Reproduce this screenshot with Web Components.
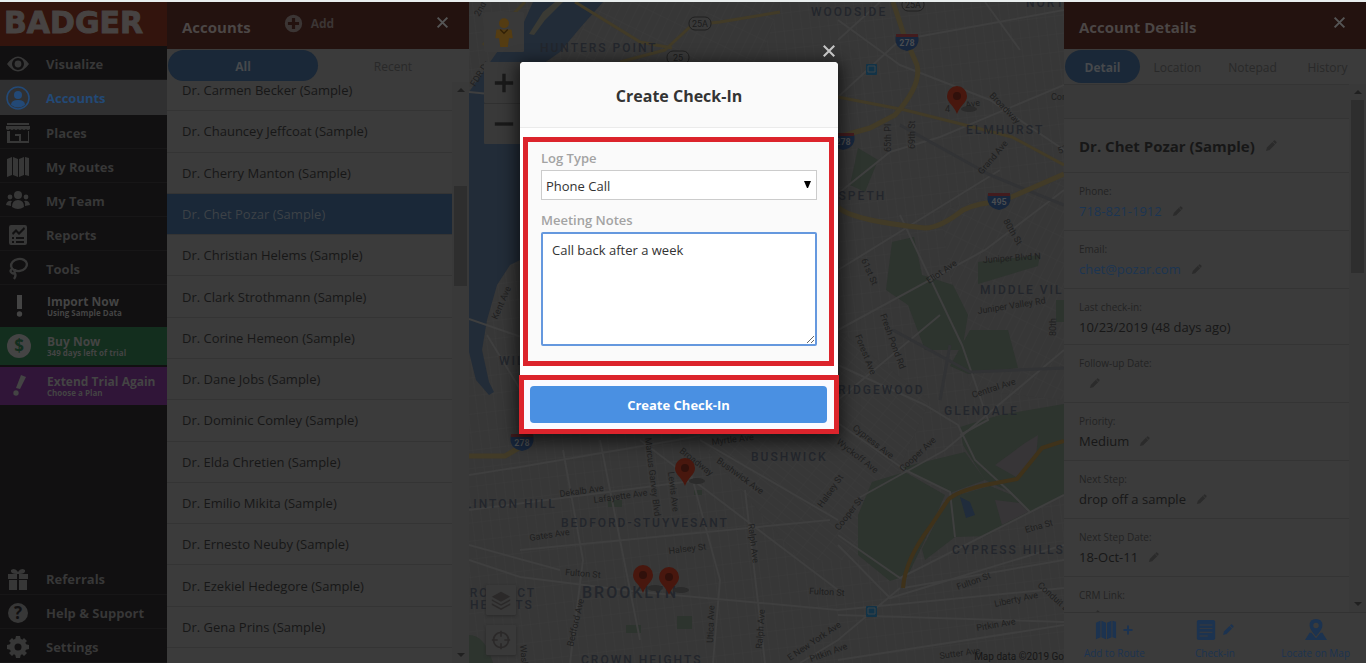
<!DOCTYPE html>
<html lang="en">
<head>
<meta charset="utf-8">
<title>Badger</title>
<style>
  html, body { height: 100%; }
  body {
    margin: 0;
    background: #3b3b3b;
    color: #171717;
    font-family: "Open Sans", "Noto Sans", sans-serif;
    font-size: 13px;
    overflow: hidden;
  }
</style>
</head>
<body>

<badger-app>
  <nav-rail slot="nav">
    <nav-item icon="eye">Visualize</nav-item>
    <nav-item icon="user" active>Accounts</nav-item>
    <nav-item icon="store">Places</nav-item>
    <nav-item icon="map">My Routes</nav-item>
    <nav-item icon="team">My Team</nav-item>
    <nav-item icon="report">Reports</nav-item>
    <nav-item icon="lasso">Tools</nav-item>
    <nav-promo icon="bang" note="Using Sample Data">Import Now</nav-promo>
    <nav-promo icon="dollar" note="349 days left of trial" tone="green">Buy Now</nav-promo>
    <nav-promo icon="slant" note="Choose a Plan" tone="purple">Extend Trial Again</nav-promo>
    <nav-item slot="foot" icon="gift">Referrals</nav-item>
    <nav-item slot="foot" icon="help">Help &amp; Support</nav-item>
    <nav-item slot="foot" icon="gear">Settings</nav-item>
  </nav-rail>

  <side-panel slot="list" heading="Accounts" add>
    <tab-bar slot="tabs" tabs="All,Recent"></tab-bar>
    <account-list></account-list>
    <scroll-track slot="scroll" start="104" size="100"></scroll-track>
  </side-panel>

  <city-map slot="map"></city-map>

  <side-panel slot="details" heading="Account Details">
    <tab-bar slot="tabs" tabs="Detail,Location,Notepad,History" compact></tab-bar>
    <account-details></account-details>
    <scroll-track slot="scroll" start="16" size="173"></scroll-track>
    <action-bar slot="foot"></action-bar>
  </side-panel>
</badger-app>

<checkin-dialog></checkin-dialog>

<script>
  (function() {
    const ICONS = {
      eye: '<path fill-rule="evenodd" d="M1 12Q12-3 23 12Q12 27 1 12ZM12 6a6 6 0 1 0 0 12a6 6 0 0 0 0-12Z"/><circle cx="12" cy="12" r="3.4"/>',
      user: '<circle cx="12" cy="12" r="11" fill="none" stroke="currentColor" stroke-width="1.6"/><circle cx="12" cy="9" r="4"/><path d="M5 19Q5 14 12 14T19 19Q12 24 5 19Z"/>',
      store: '<path d="M1 2H23V4H1ZM0 5H24V8Q22 10 20 8Q18 10 16 8Q14 10 12 8Q10 10 8 8Q6 10 4 8Q2 10 0 8ZM2 10H4V20H22V10H23V22H1V10ZM9 13H15V21H13V15H9Z"/>',
      map: '<path d="M1 4L6 2V20L1 22ZM7 2L12 4V22L7 20ZM13 4L18 2V20L13 22ZM19 2L23 3V21L19 20Z"/>',
      team: '<circle cx="12" cy="6" r="4"/><circle cx="4" cy="8" r="2.4"/><circle cx="20" cy="8" r="2.4"/><path d="M6 18Q6 11 12 11T18 18Q12 22 6 18ZM0 16Q1 11 6 12Q4 14 5 17ZM24 16Q23 11 18 12Q20 14 19 17Z"/>',
      report: '<path fill-rule="evenodd" d="M5 2H19Q21 2 21 4V20Q21 22 19 22H5Q3 22 3 20V4Q3 2 5 2ZM6 10L10 6L13 9L18 4L19 6L13 12L10 9L7 12ZM6 14H8V16H6ZM10 14H18V16H10ZM6 18H8V20H6ZM10 18H18V20H10Z"/>',
      lasso: '<g fill="none" stroke="currentColor" stroke-width="2.4"><ellipse cx="13" cy="8" rx="8" ry="6" transform="rotate(-10 13 8)"/><path d="M6 12Q3 14 6 16T9 12M8 15Q11 18 8 22"/></g>',
      bang: '<path d="M10 1H15V15H10Z"/><circle cx="12.500" cy="20" r="2.700"/>',
      slant: '<path d="M14 1L19 3L13 15L9 14Z"/><circle cx="9" cy="19" r="2.700"/>',
      gift: '<path d="M2 7H11V12H2ZM13 7H22V12H13ZM3 13H11V23H3ZM13 13H21V23H13ZM11 7Q4 7 5 3Q9 0 12 5Q15 0 19 3Q20 7 13 7Z"/>',
      gear: '<circle cx="12" cy="12" r="6" fill="none" stroke="currentColor" stroke-width="5"/><path d="M10 1H14L15 5H9ZM10 23H14L15 19H9ZM1 10V14L5 15V9ZM23 10V14L19 15V9ZM3 6L6 3L9 6L6 9ZM21 6L18 3L15 6L18 9ZM3 18L6 21L9 18L6 15ZM21 18L18 21L15 18L18 15Z"/>',
      plus: '<path fill-rule="evenodd" d="M12 1a11 11 0 1 0 0 22a11 11 0 0 0 0-22ZM10 5H14V10H19V14H14V19H10V14H5V10H10Z"/>',
      add: '<path d="M10 3H14V10H21V14H14V21H10V14H3V10H10Z"/>',
      close: '<path d="M3 3L21 21M21 3L3 21" fill="none" stroke="currentColor" stroke-width="3.6"/>',
      pencil: '<path d="M2 22L4 15L15 4L20 9L9 20ZM16 3L18 1Q19 0 21 2L23 4Q24 5 22 7L21 8Z"/>',
      note: '<path fill-rule="evenodd" d="M4 1H20Q22 1 22 3V21Q22 23 20 23H4Q2 23 2 21V3Q2 1 4 1ZM5 6H19V7H5ZM5 10H19V11H5ZM5 14H19V15H5ZM5 18H14V19H5Z"/>',
      locate: '<path fill-rule="evenodd" d="M12 0Q19 0 19 7Q19 11 12 19Q5 11 5 7Q5 0 12 0ZM12 4a3 3 0 1 0 0 6a3 3 0 0 0 0-6Z"/><path d="M5 15H7L12 21L17 15H19L24 23H0Z"/>',
      man: '<circle cx="12" cy="5" r="4"/><path d="M6 10H18L19 17H16L15 24H9L8 17H5Z"/><path d="M9 10L12 13L15 10" fill="none" stroke="#302007"/>',
      minus: '<path d="M1 10H23V14H1Z"/>',
      zoomin: '<path d="M10 1H14V10H23V14H14V23H10V14H1V10H10Z"/>',
      layers: '<path d="M12 2L23 8L12 14L1 8ZM1 11L12 17L23 11V13L12 19L1 13ZM1 16L12 22L23 16V18L12 24L1 18Z"/>',
      target: '<g fill="none" stroke="currentColor" stroke-width="2"><circle cx="12" cy="12" r="9"/><path d="M12 1V8M12 16V23M1 12H8M16 12H23"/></g>'
    };

    // glyph on a filled disc, with the character kept as text
    const disc = (char, ink, r) => '<circle cx="12" cy="12" r="' + r + '"/><text x="12" y="18" text-anchor="middle" font-size="17" font-weight="700" fill="' + ink + '">' + char + '</text>';
    ICONS.dollar = disc('$', '#132e1e', 12);
    ICONS.help = disc('?', '#111011', 10);

    function define(name, render) {
      window.customElements.define(name, class extends HTMLElement {
        connectedCallback() {
          if (this.shadowRoot) { return; }
          const template = document.createElement('template');
          template.innerHTML = render(this);
          this.attachShadow({ mode: 'open' }).appendChild(template.content.cloneNode(true));
        }
      });
    }

    define('app-icon', el => `
      <style>
        :host { display: inline-block; width: 24px; height: 24px; flex: none; }
        svg { display: block; width: 100%; height: 100%; fill: currentColor; }
      </style>
      <svg viewBox="0 0 24 24" aria-hidden="true">${ICONS[el.getAttribute('name')]}</svg>
    `);

    define('badger-app', () => `
      <style>
        :host {
          display: grid;
          grid-template-columns: 167px 302px minmax(0, 1fr) 302px;
          grid-template-rows: minmax(0, 1fr);
          height: 100vh;
          box-sizing: border-box;
          border-top: 2px solid #e9eeee;
        }
      </style>
      <slot name="nav"></slot><slot name="list"></slot><slot name="map"></slot><slot name="details"></slot>
    `);

    define('nav-rail', () => `
      <style>
        :host { display: flex; flex-direction: column; background: #111011; min-height: 0; }
        .logo {
          background: #33140d;
          color: #474342;
          height: 44px;
          line-height: 42px;
          padding-left: 4px;
          font-family: "DejaVu Sans", sans-serif;
          font-weight: 700;
          font-size: 30px;
          -webkit-text-stroke: 1px #474342;
        }
        .foot { margin-top: auto; }
      </style>
      <div class="logo">BADGER</div>
      <nav><slot></slot></nav>
      <nav class="foot"><slot name="foot"></slot></nav>
    `);

    define('nav-item', el => `
      <style>
        :host { display: block; color: #373737; }
        :host([active]) { color: #234976; background: #303031; }
        a {
          display: flex;
          align-items: center;
          gap: 16px;
          height: 34px;
          padding: 2px 0 0 6px;
          box-sizing: border-box;
          border-bottom: 1px solid #171617;
          color: inherit;
          text-decoration: none;
          font-weight: 700;
          font-size: 13px;
        }
        :host([active]) a { height: 35px; border-color: #303031; }
      </style>
      <a href="#"><app-icon name="${el.getAttribute('icon')}"></app-icon><slot></slot></a>
    `);

    define('nav-promo', el => `
      <style>
        :host { display: block; color: #444; }
        :host([tone=green]) { background: #132e1e; }
        :host([tone=purple]) { background: #301538; margin-top: 2px; }
        a {
          display: flex;
          align-items: center;
          gap: 16px;
          height: 38px;
          padding-left: 7px;
          color: inherit;
          text-decoration: none;
          font-weight: 700;
          font-size: 12px;
          line-height: 14px;
        }
        :host(:not([tone])) a { height: 42px; }
        small { display: block; font-size: 8px; line-height: 8px; }
      </style>
      <a href="#"><app-icon name="${el.getAttribute('icon')}"></app-icon><span><slot></slot><small>${el.getAttribute('note')}</small></span></a>
    `);

    define('side-panel', el => `
      <style>
        :host { display: flex; flex-direction: column; background: #3b3b3b; min-width: 0; min-height: 0; }
        header {
          display: flex;
          align-items: center;
          height: 47px;
          flex: none;
          padding: 0 20px 0 15px;
          background: #23120f;
          color: #4b4645;
        }
        h2 { margin: 0; font-size: 15px; line-height: 20px; padding-top: 2px; }
        button { border: 0; padding: 0; background: none; color: inherit; font: inherit; }
        .add { display: flex; align-items: center; gap: 8px; margin: 0 0 4px 33px; color: #3b3534; font-size: 12px; font-weight: 700; }
        .add app-icon { width: 19px; height: 19px; }
        .close { margin: 0 0 6px auto; color: #555; }
        .close app-icon { width: 13px; height: 13px; display: block; }
        .body { flex: 1; display: flex; min-height: 0; overflow: hidden; }
        .content { flex: 1; min-width: 0; display: flex; flex-direction: column; overflow: hidden; }
      </style>
      <header>
        <h2>${el.getAttribute('heading')}</h2>
        ${el.hasAttribute('add') ? '<button class="add"><app-icon name="plus"></app-icon>Add</button>' : ''}
        <button class="close" aria-label="Close"><app-icon name="close"></app-icon></button>
      </header>
      <slot name="tabs"></slot>
      <div class="body"><div class="content"><slot></slot></div><slot name="scroll"></slot></div>
      <slot name="foot"></slot>
    `);

    define('tab-bar', el => `
      <style>
        :host { display: block; flex: none; }
        div { display: grid; grid-auto-flow: column; grid-auto-columns: 1fr; padding: 1px; height: 33px; box-sizing: border-box; }
        :host([compact]) div { height: 35px; }
        button { border: 0; padding: 2px 0 0; border-radius: 17px; background: none; color: #292929; font: inherit; font-size: 12px; }
        button:first-child { background: #1a2838; color: #46494c; font-weight: 700; }
      </style>
      <div role="tablist">${el.getAttribute('tabs').split(',').map(tab => `<button role="tab">${tab}</button>`).join('')}</div>
    `);

    define('scroll-track', el => `
      <style>
        :host { display: flex; flex-direction: column; width: 17px; flex: none; background: #393939; align-items: center; }
        i { border: 4px solid transparent; border-bottom-color: #202020; margin: 2px 0 6px; }
        b { width: 13px; height: ${el.getAttribute('size')}px; margin-top: ${el.getAttribute('start') - 16}px; background: #2e2e2e; }
        i:last-child { margin: auto 0 2px; border-color: #202020 transparent transparent; }
      </style>
      <i></i><b></b><i></i>
    `);

    const ACCOUNTS = [
      'Carmen Becker', 'Chauncey Jeffcoat', 'Cherry Manton', 'Chet Pozar', 'Christian Helems',
      'Clark Strothmann', 'Corine Hemeon', 'Dane Jobs', 'Dominic Comley', 'Elda Chretien',
      'Emilio Mikita', 'Ernesto Neuby', 'Ezekiel Hedegore', 'Gena Prins'
    ];

    define('account-list', () => `
      <style>
        :host { display: flex; flex: 1; }
        ul { flex: 1; margin: -12px 0 15px; padding: 0; list-style: none; display: grid; grid-auto-rows: minmax(41px, 1fr); }
        li { display: flex; border-bottom: 1px solid #343434; }
        a { flex: 1; display: flex; align-items: center; padding-left: 15px; color: #171717; text-decoration: none; }
        .on { background: #1a2838; }
        .on a { color: #3d4247; }
      </style>
      <ul>${ACCOUNTS.map(name => `<li${name === 'Chet Pozar' ? ' class="on"' : ''}><a href="#">Dr. ${name} (Sample)</a></li>`).join('')}</ul>
    `);

    define('detail-field', el => `
      <style>
        :host { display: block; height: 58px; flex: none; box-sizing: border-box; padding: 10px 15px 0; border-bottom: 1px solid #343434; }
        :host([fixed]) { height: 56px; }
        small { display: block; font-size: 10px; line-height: 16px; color: #232323; }
        p { display: flex; align-items: center; gap: 10px; margin: 0; min-height: 24px; line-height: 24px; color: #171717; }
        a { color: #1b3552; text-decoration: none; }
        button { border: 0; padding: 0; background: none; color: #2b2b2b; }
        app-icon { width: 11px; height: 11px; display: block; }
      </style>
      <small>${el.getAttribute('label')}</small>
      <p>${el.getAttribute('href') ? `<a href="${el.getAttribute('href')}">${el.getAttribute('value')}</a>` : `<span>${el.getAttribute('value') || ''}</span>`}
      ${el.hasAttribute('fixed') ? '' : '<button aria-label="Edit"><app-icon name="pencil"></app-icon></button>'}</p>
    `);

    define('account-details', () => `
      <style>
        :host { display: flex; flex-direction: column; }
        .gap { height: 35px; flex: none; background: #393939; border-top: 1px solid #343434; border-bottom: 1px solid #343434; box-sizing: border-box; }
        h3 { display: flex; align-items: center; gap: 10px; height: 54px; box-sizing: border-box; margin: 0; padding-left: 15px; font-size: 15px; border-bottom: 1px solid #343434; flex: none; }
        button { border: 0; padding: 0; background: none; color: #2b2b2b; }
        app-icon { width: 12px; height: 12px; display: block; }
      </style>
      <div class="gap"></div>
      <h3>Dr. Chet Pozar (Sample) <button aria-label="Edit name"><app-icon name="pencil"></app-icon></button></h3>
      <detail-field label="Phone:" value="718-821-1912" href="tel:7188211912"></detail-field>
      <detail-field label="Email:" value="chet@pozar.com" href="mailto:chet@pozar.com"></detail-field>
      <detail-field label="Last check-in:" value="10/23/2019 (48 days ago)" fixed></detail-field>
      <detail-field label="Follow-up Date:"></detail-field>
      <detail-field label="Priority:" value="Medium"></detail-field>
      <detail-field label="Next Step:" value="drop off a sample"></detail-field>
      <detail-field label="Next Step Date:" value="18-Oct-11"></detail-field>
      <detail-field label="CRM Link:"></detail-field>
    `);

    define('action-bar', () => `
      <style>
        :host { display: grid; grid-template-columns: 1fr 1fr 1fr; flex: none; height: 51px; box-sizing: border-box; border-top: 1px solid #323232; }
        button { border: 0; padding: 5px 0 0; background: none; font: inherit; font-size: 10px; line-height: 14px; color: #1c3350; display: flex; flex-direction: column; align-items: center; gap: 4px; }
        span { display: flex; align-items: center; gap: 5px; }
        app-icon { width: 22px; height: 24px; }
        .s { width: 12px; height: 12px; }
      </style>
      <button><span><app-icon name="map"></app-icon><app-icon class="s" name="add"></app-icon></span>Add to Route</button>
      <button><span><app-icon name="note"></app-icon><app-icon class="s" name="pencil"></app-icon></span>Check-in</button>
      <button><span><app-icon name="locate"></app-icon></span>Locate on Map</button>
    `);

    // [text, x, y, rotation]
    const STREETS = [
      ['FDR Dr', 475, 87, -58], ['2nd', 479, 17, -60], ['Kent Ave', 497, 320, -66], ['65th Pl', 891, 152, -90], ['69th St', 915, 149, -90],
      ['Broadway', 989, 96, 46], ['Grand Ave', 982, 175, -50], ['Corona', 1051, 100, 0], ['57th', 1059, 154, -20],
      ['4', 945, 112, 0], ['Ave', 966, 108, -10],
      ['80th St', 1003, 221, 60], ['61st St', 861, 260, 66], ['Eliot Ave', 929, 284, -34], ['Juniper Blvd N', 983, 263, -4],
      ['Juniper Valley Rd', 978, 314, -9], ['Fresh Pond Rd', 880, 315, 70], ['Forest Ave', 855, 336, 68], ['Central Ave', 973, 398, -18],
      ['Cypress Ave', 852, 429, 38], ['Wyckoff Ave', 836, 443, 38], ['Cooper Ave', 903, 472, -43], ['Cooper St', 839, 531, -52],
      ['Halsey St', 822, 508, -55], ['Etna St', 1026, 533, -16], ['Fulton St', 958, 590, -20], ['Liberty Ave', 995, 607, -12],
      ['Pitkin Ave', 977, 631, -10], ['Sutter Ave', 940, 659, -8], ['Conduit Blvd', 1037, 586, 42], ['80th', 1056, 336, -90],
      ['Myrtle Ave', 712, 445, -7], ['Broadway', 679, 452, 38], ['Bushwick Ave', 716, 462, 36], ['Marcus Garvey Blvd', 645, 438, 83],
      ['Lewis Ave', 668, 472, 83], ['Dekalb Ave', 560, 497, -8], ['Lafayette Ave', 594, 503, -8], ['Gates Ave', 530, 541, -9],
      ['Halsey St', 669, 554, -7], ['Fulton St', 565, 575, 5], ['Fulton St', 809, 594, 3], ['Ralph Ave', 748, 524, 83],
      ['Ralph Ave', 762, 649, -86], ['Utica Ave', 713, 643, -88], ['Bedford Ave', 573, 647, -77], ['E New York Ave', 790, 661, -34],
      ['Wash', 520, 645, 85], ['Pitkin Ave', 811, 662, -20]
    ];
    const AREAS = [
      ['HUNTERS POINT', 540, 52], ['WOODSIDE', 811, 16], ['NORTH', 1026, 7], ['ELMHURST', 966, 134], ['MASPETH', 816, 200],
      ['MIDDLE VIL', 980, 294], ['RIDGEWOOD', 838, 394], ['GLENDALE', 944, 415], ['CYPRESS HILLS', 952, 554],
      ['BUSHWICK', 751, 461], ['BEDFORD-STUYVESANT', 561, 527], ['CLINTON HILL', 455, 508], ['WILLIAMSBURG', 499, 365],
      ['PROSPECT', 460, 597], ['HEIGHTS', 470, 609], ['CROWN HEIGHTS', 581, 664]
    ];
    const PINS = [[957, 114], [685, 486], [643, 593], [669, 595]];
    const SHIELDS = [['278', 907, 42], ['278', 843, 141], ['495', 999, 201], ['278', 522, 442]];
    const OVALS = [['25A', 700, 23], ['25', 678, 57], ['25A', 913, 4]];
    const STATIONS = [[871, 69], [871, 611]];

    define('city-map', () => `
      <style>
        :host { display: block; position: relative; overflow: hidden; background: #373737; }
        .map { display: block; width: 100%; height: 100%; font-family: Roboto, sans-serif; }
        .street { font-size: 9px; fill: #202020; }
        .area { font-size: 12px; font-weight: 500; letter-spacing: 2px; fill: #23262c; }
        .tools { position: absolute; left: 15px; top: 10px; display: grid; gap: 10px; }
        .low { left: 17px; top: auto; bottom: 8px; }
        button { display: grid; place-items: center; width: 40px; height: 40px; padding: 0; border: 0; background: #393939; color: #191919; border-radius: 1px; }
        .zoom button { height: 41px; }
        .zoom button + button { border-top: 1px solid #303030; }
        app-icon { width: 20px; height: 20px; }
        .man { color: #543c12; }
        .man app-icon { width: 30px; height: 30px; }
        .low button { width: 30px; height: 30px; color: #2b2929; box-shadow: 0 1px 3px #2a2a2a; }
        .credit { position: absolute; right: 0; bottom: 1px; font: 10px Roboto, sans-serif; color: #161616; }
      </style>
      <svg class="map" viewBox="469 2 595 661" preserveAspectRatio="xMidYMid slice" role="img" aria-label="Map of Brooklyn and Queens">
        <defs>
          <pattern id="a" width="9" height="18" patternUnits="userSpaceOnUse" patternTransform="rotate(-7)"><path d="M0 0V18M0 0H9" stroke="#3c3c3c" fill="none"/></pattern>
          <pattern id="b" width="7" height="19" patternUnits="userSpaceOnUse" patternTransform="rotate(-52)"><path d="M0 0V19M0 0H7" stroke="#3c3c3c" fill="none"/></pattern>
          <pattern id="c" width="8" height="23" patternUnits="userSpaceOnUse" patternTransform="rotate(26)"><path d="M0 0V23M0 0H8" stroke="#3c3c3c" fill="none"/></pattern>
        </defs>
        <path d="M469 2H1064V663H469Z" fill="url(#a)"/>
        <path d="M690 430L838 330L930 400L858 560L800 560Z" fill="#373737"/>
        <path d="M690 430L838 330L930 400L858 560L800 560Z" fill="url(#b)"/>
        <path d="M600 2H780L760 62H560Z" fill="#373737"/>
        <path d="M600 2H780L760 62H560Z" fill="url(#c)"/>
        <path d="M940 210L1064 180V400L970 390Z" fill="#373737"/>
        <path d="M940 210L1064 180V400L970 390Z" fill="url(#c)"/>
        <path d="M603 2L580 28L560 52L540 66L530 255L510 265L497 285L487 320L482 350L489 382L494 392L489 395L476 380L469 352V92L500 48L524 22L533 2Z" fill="#222c38"/>
        <path d="M529 34L543 12L555 2H563L545 20L534 35Z" fill="#3a3a34"/>
        <g fill="#2d342e">
          <path d="M858 148L878 160L865 192L850 185ZM892 242L914 237L922 275L953 285L968 315L962 350H925L908 305L886 290ZM978 262L1040 255L1038 266L978 284ZM970 330H1008L1018 368L968 374L950 366ZM1056 300H1064V322H1056Z"/>
          <path d="M872 482L905 472L945 495L925 540L908 575L890 581L858 555V515ZM900 468L965 452L985 480L950 493ZM960 427L1000 415L1064 404V495L1030 512L1010 492L985 480L963 445ZM948 498L990 486L1012 495L1028 512L986 536L955 537L925 560L922 549Z"/>
          <path d="M677 616H692V629H677ZM626 625H641V633H626ZM694 490H702V495H694ZM608 500H622V507H608ZM469 635Q485 635 493 663H469Z"/>
        </g>
        <path d="M995 465L1025 443L1038 435L1036 458L1016 477ZM995 500L1020 503L1028 512L1002 525Z" fill="#373537"/>
        <path d="M960 497L970 502L975 515L966 518Z" fill="#202c3c"/>
        <g fill="none" stroke="#3f3f3f" stroke-width="2">
          <path d="M838 97L900 40L1064 10M838 20L900 65L990 100L1064 150M840 192L890 152L940 137L1064 85M838 270L1000 170M838 330L985 250L1064 190M900 215L962 345L988 420L960 435"/>
          <path d="M838 365L925 405L958 425L975 460L1010 492L1030 512M838 423L905 470L950 492L955 537M838 535L900 578L1064 495M855 500L945 450L1064 350M838 545L890 598L1064 545M903 588L1064 560"/>
          <path d="M469 475L520 467L700 436M469 560L520 577L640 592L838 610L1064 588M469 545L560 570M640 440L838 590M700 440L838 520M600 440L640 640M563 450L583 560L570 663M690 470L720 580L713 663M745 490L765 663M469 510L700 480M520 550L830 520M800 663L838 640L900 588M838 615L1064 622M838 660L1064 625"/>
          <path d="M469 92L530 98M469 319L530 340M487 335L545 430M985 2L1020 50M880 2L838 40M940 315L838 400"/>
        </g>
        <path d="M900 125L990 175L1064 205M950 345L940 400M893 330L970 372L1064 368" fill="none" stroke="#323335" stroke-width="3"/>
        <g fill="none" stroke="#423b27" stroke-linejoin="round">
          <path stroke-width="3" d="M575 2L640 42L672 48M620 62L665 50L692 25L720 22L780 12M838 97L905 110L965 125L1012 137L1064 165M483 45L525 2"/>
          <path stroke-width="5" d="M893 2L904 35L917 65Q922 85 895 115L870 128L838 137M838 207Q850 220 925 228Q940 228 963 210Q980 202 1000 202L1064 174M469 456H505L522 446"/>
          <path stroke-width="4" stroke="#3f321a" d="M903 588Q905 560 930 527L948 500Q955 492 985 485L1017 479L1042 448L1064 441"/>
        </g>
        <g class="street">${STREETS.map(s => `<text x="${s[1]}" y="${s[2]}" transform="rotate(${s[3]} ${s[1]} ${s[2]})">${s[0]}</text>`).join('')}</g>
        <g class="area">${AREAS.map(a => `<text x="${a[1]}" y="${a[2]}">${a[0]}</text>`).join('')}<text x="582" y="598" font-size="16">BROOKLYN</text></g>
        ${OVALS.map(o => `<rect x="${o[1] - 11}" y="${o[2] - 6}" width="22" height="13" rx="6" fill="#393939" stroke="#202020"/><text x="${o[1]}" y="${o[2] + 4}" text-anchor="middle" font-size="9" fill="#1c1c1c">${o[0]}</text>`).join('')}
        ${SHIELDS.map(s => `<path d="M${s[1] - 11} ${s[2] - 7}H${s[1] + 11}Q${s[1] + 14} ${s[2] + 6} ${s[1]} ${s[2] + 9}Q${s[1] - 14} ${s[2] + 6} ${s[1] - 11} ${s[2] - 7}Z" fill="#17263c"/><path d="M${s[1] - 11} ${s[2] - 8}H${s[1] + 11}V${s[2] - 5}H${s[1] - 11}Z" fill="#431c1e"/><text x="${s[1]}" y="${s[2] + 4}" text-anchor="middle" font-size="9" font-weight="700" fill="#4a4d50">${s[0]}</text>`).join('')}
        ${STATIONS.map(s => `<rect x="${s[0] - 5}" y="${s[1] - 5}" width="11" height="11" rx="1" fill="#123347"/><path d="M${s[0] - 3} ${s[1] - 3}H${s[0] + 4}V${s[1] + 3}H${s[0] - 3}Z" fill="none" stroke="#3c4448"/>`).join('')}
        ${PINS.map(p => `<ellipse cx="${p[0] + 12}" cy="${p[1] - 5}" rx="8" ry="3" fill="#2b2b2b"/><path d="M${p[0]} ${p[1]}C${p[0] - 3} ${p[1] - 9} ${p[0] - 10} ${p[1] - 11} ${p[0] - 10} ${p[1] - 18}A10 10 0 0 1 ${p[0] + 10} ${p[1] - 18}C${p[0] + 10} ${p[1] - 11} ${p[0] + 3} ${p[1] - 9} ${p[0]} ${p[1]}Z" fill="#48170e"/><circle cx="${p[0]}" cy="${p[1] - 18}" r="4" fill="#30100b"/>`).join('')}
      </svg>
      <div class="tools">
        <button class="man" aria-label="Street View"><app-icon name="man"></app-icon></button>
        <div class="zoom">
          <button aria-label="Zoom in"><app-icon name="zoomin"></app-icon></button>
          <button aria-label="Zoom out"><app-icon name="minus"></app-icon></button>
        </div>
      </div>
      <div class="tools low">
        <button aria-label="Layers"><app-icon name="layers"></app-icon></button>
        <button aria-label="My location"><app-icon name="target"></app-icon></button>
      </div>
      <span class="credit">Map data ©2019 Go</span>
    `);

    define('checkin-dialog', () => `
      <style>
        :host { position: absolute; inset: 0; display: flex; justify-content: center; align-items: flex-start; padding: 44px 8px 0 0; }
        .close { display: block; margin: 0 2px 4px auto; border: 0; padding: 0; background: none; color: #c4c4c4; }
        .close app-icon { width: 14px; height: 14px; display: block; }
        section { width: 318px; }
        form { background: #fff; border-radius: 4px 4px 0 0; box-shadow: 0 4px 16px 4px rgba(0, 0, 0, 0.6); }
        h1 { margin: 0; height: 66px; box-sizing: border-box; border-bottom: 1px solid #ebebeb; border-radius: 4px 4px 0 0; background: #fafafa; color: #333; font-size: 16px; font-weight: 700; line-height: 68px; text-align: center; }
        .fields { margin: 9px 4px 9px 3px; padding: 4px 12px 15px 13px; border: 5px solid #dc242c; background: #fafafa; }
        label { display: block; color: #a3a3a3; font-weight: 600; line-height: 24px; }
        .pick { position: relative; margin-bottom: 8px; }
        select, textarea { display: block; width: 100%; box-sizing: border-box; font: inherit; color: #333; background: #fff; margin: 0; }
        select { appearance: none; height: 30px; border: 1px solid #ccc; border-radius: 0; padding: 2px 4px 0; }
        .pick svg { position: absolute; right: 6px; top: 11px; width: 7px; height: 7px; }
        textarea { height: 114px; border: 2px solid #6598de; border-radius: 2px; padding: 7px 9px; outline: none; line-height: 18px; }
        footer { margin: 0 -1px; padding: 6px 7px 6px 6px; border: 5px solid #dc242c; background: #fafaff; }
        .submit { width: 100%; height: 37px; display: block; border: 0; border-radius: 4px; background: #4a90e2; color: #fff; font: inherit; font-weight: 700; }
      </style>
      <section role="dialog" aria-labelledby="title">
        <button class="close" aria-label="Close"><app-icon name="close"></app-icon></button>
        <form>
          <h1 id="title">Create Check-In</h1>
          <div class="fields">
            <label for="type">Log Type</label>
            <div class="pick">
              <select id="type"><option>Phone Call</option></select>
              <svg viewBox="0 0 7 7"><path d="M0 0H7L4 7H3Z"/></svg>
            </div>
            <label for="notes">Meeting Notes</label>
            <textarea id="notes">Call back after a week</textarea>
          </div>
          <footer><button class="submit" type="button">Create Check-In</button></footer>
        </form>
      </section>
    `);
  })();
</script>
</body>
</html>
